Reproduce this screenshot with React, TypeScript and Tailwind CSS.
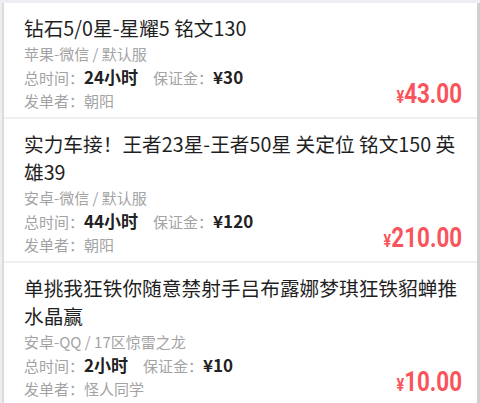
import React from 'react';

interface Order {
  title: string;
  account: string;
  hours: string;
  deposit: string;
  sender: string;
  price: string;
}

const ORDERS: Order[] = [
  {
    title: '钻石5/0星-星耀5 铭文130',
    account: '苹果-微信 / 默认服',
    hours: '24小时',
    deposit: '¥30',
    sender: '朝阳',
    price: '43.00',
  },
  {
    title: '实力车接！王者23星-王者50星 关定位 铭文150 英雄39',
    account: '安卓-微信 / 默认服',
    hours: '44小时',
    deposit: '¥120',
    sender: '朝阳',
    price: '210.00',
  },
  {
    title: '单挑我狂铁你随意禁射手吕布露娜梦琪狂铁貂蝉推水晶赢',
    account: '安卓-QQ / 17区惊雷之龙',
    hours: '2小时',
    deposit: '¥10',
    sender: '怪人同学',
    price: '10.00',
  },
];

const OrderCard: React.FC<{ order: Order }> = ({ order }) => {
  return (
    <div className="border-b-2 border-[#efefef] bg-white pl-[20px] pr-[15px] pt-[11px] pb-[5px]">
      <div className="text-[19.7px] leading-[28px] text-[#1f1f1f]">{order.title}</div>
      <div className="flex items-end justify-between">
        <div className="flex flex-col text-[15px] leading-[23px] text-[#a3a3a3]">
          <div>{order.account}</div>
          <div className="flex items-baseline">
            <span>总时间：</span>
            <span className="text-[17px] font-semibold text-[#222]">{order.hours}</span>
            <span className="ml-[15px]">保证金：</span>
            <span className="text-[17px] font-semibold text-[#222]">{order.deposit}</span>
          </div>
          <div>发单者：{order.sender}</div>
        </div>
        <div className="mb-[4px] origin-right scale-x-[0.8] font-['Roboto',sans-serif] font-bold leading-none text-[#f8545b]">
          <span className="text-[18px]">¥</span>
          <span className="text-[28px]">{order.price}</span>
        </div>
      </div>
    </div>
  );
};

export default function App() {
  return (
    <div className="min-h-screen bg-[#eceef1] pt-[3px] font-['Noto_Sans_CJK_SC','Noto_Sans',sans-serif]">
      <div className="ml-[2px] min-h-[400px] border-l-2 border-r-[3px] border-l-[#dcdcdc] border-r-[#cfcfcf] bg-white">
        {ORDERS.map((order, i) => (
          <OrderCard key={i} order={order} />
        ))}
      </div>
    </div>
  );
}
